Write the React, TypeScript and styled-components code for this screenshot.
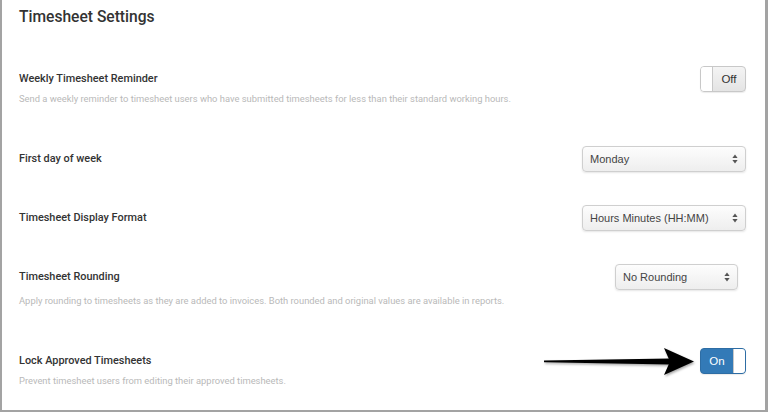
import React from "react";
import styled, { createGlobalStyle } from "styled-components";

const Global = createGlobalStyle`
  html, body { margin: 0; padding: 0; background: #fff; }
  * { box-sizing: border-box; }
`;

const Page = styled.div`
  position: relative;
  width: 768px;
  height: 412px;
  background: #fff;
  border-left: 2px solid #a3a3a3;
  border-right: 3px solid #a3a3a3;
  border-bottom: 2px solid #a3a3a3;
  padding: 7px 19px 0 17px;
  font-family: Roboto, "Liberation Sans", sans-serif;
  overflow: hidden;
`;

const Title = styled.h1`
  margin: 0 0 39px;
  font-size: 15.6px;
  line-height: 20px;
  font-weight: 500;
  color: #333;
`;

const Setting = styled.div<{ $gap: number }>`
  display: flex;
  align-items: flex-start;
  justify-content: space-between;
  margin-bottom: ${(p) => p.$gap}px;
`;

const Info = styled.div`
  display: flex;
  flex-direction: column;
`;

const Label = styled.div`
  font-size: 10.9px;
  line-height: 26px;
  font-weight: 500;
  color: #333;
`;

const Desc = styled.div<{ $offset: number }>`
  font-size: 9.4px;
  line-height: 14px;
  color: #b9b9b9;
  margin-top: ${(p) => p.$offset}px;
`;

const Toggle = styled.div<{ $on: boolean }>`
  width: 46px;
  height: 26px;
  border-radius: 4px;
  border: 1px solid ${(p) => (p.$on ? "#2e6da4" : "#c8c8c8")};
  background: ${(p) =>
    p.$on ? "#337ab7" : "linear-gradient(#f4f4f4, #e4e4e4)"};
  display: flex;
  flex-direction: ${(p) => (p.$on ? "row-reverse" : "row")};
  overflow: hidden;
  box-shadow: 0 1px 1px rgba(0, 0, 0, 0.08);
  font-family: "Liberation Sans", Arial, sans-serif;
`;

const Knob = styled.div<{ $on: boolean }>`
  width: 12px;
  height: 100%;
  background: #fff;
  border-${(p) => (p.$on ? "left" : "right")}: 1px solid #c8c8c8;
`;

const ToggleText = styled.div<{ $on: boolean }>`
  flex: 1;
  display: flex;
  align-items: center;
  justify-content: center;
  font-size: 11.5px;
  color: ${(p) => (p.$on ? "#fff" : "#333")};
`;

const Select = styled.div<{ $w: number; $mr: number }>`
  width: ${(p) => p.$w}px;
  height: 26px;
  margin-right: ${(p) => p.$mr}px;
  border: 1px solid #cfcfcf;
  border-radius: 4px;
  background: linear-gradient(#fdfdfd, #eeeeee);
  box-shadow: 0 1px 2px rgba(0, 0, 0, 0.1);
  display: flex;
  align-items: center;
  justify-content: space-between;
  padding: 0 7px 0 7px;
  font-family: "Liberation Sans", Arial, sans-serif;
  font-size: 11px;
  color: #444;
`;

const Arrow = styled.svg`
  position: absolute;
  left: 536px;
  top: 343px;
  overflow: visible;
`;

const Chevrons = () => (
  <svg width="6" height="10" viewBox="0 0 6 10">
    <path d="M3 0.5 L5.6 4 H0.4 Z" fill="#555" />
    <path d="M3 9.5 L5.6 6 H0.4 Z" fill="#555" />
  </svg>
);

type Control =
  | { kind: "toggle"; on: boolean }
  | { kind: "select"; value: string; w: number; mr: number };

const settings: {
  label: string;
  desc?: string;
  offset?: number;
  gap: number;
  control: Control;
}[] = [
  {
    label: "Weekly Timesheet Reminder",
    desc: "Send a weekly reminder to timesheet users who have submitted timesheets for less than their standard working hours.",
    offset: 0,
    gap: 40,
    control: { kind: "toggle", on: false },
  },
  {
    label: "First day of week",
    gap: 33,
    control: { kind: "select", value: "Monday", w: 164, mr: 0 },
  },
  {
    label: "Timesheet Display Format",
    gap: 33,
    control: { kind: "select", value: "Hours Minutes (HH:MM)", w: 164, mr: 0 },
  },
  {
    label: "Timesheet Rounding",
    desc: "Apply rounding to timesheets as they are added to invoices. Both rounded and original values are available in reports.",
    offset: 4,
    gap: 40,
    control: { kind: "select", value: "No Rounding", w: 123, mr: 8 },
  },
  {
    label: "Lock Approved Timesheets",
    desc: "Prevent timesheet users from editing their approved timesheets.",
    offset: 0,
    gap: 0,
    control: { kind: "toggle", on: true },
  },
];

export default function App() {
  return (
    <Page>
      <Global />
      <Title>Timesheet Settings</Title>
      {settings.map((s) => (
        <Setting key={s.label} $gap={s.gap}>
          <Info>
            <Label>{s.label}</Label>
            {s.desc && <Desc $offset={s.offset ?? 0}>{s.desc}</Desc>}
          </Info>
          {s.control.kind === "toggle" ? (
            <Toggle $on={s.control.on}>
              <Knob $on={s.control.on} />
              <ToggleText $on={s.control.on}>{s.control.on ? "On" : "Off"}</ToggleText>
            </Toggle>
          ) : (
            <Select $w={s.control.w} $mr={s.control.mr}>
              <span>{s.control.value}</span>
              <Chevrons />
            </Select>
          )}
        </Setting>
      ))}
      <Arrow width="160" height="36" viewBox="0 0 160 36">
        <defs>
          <filter id="sh" x="-10%" y="-30%" width="130%" height="170%">
            <feDropShadow dx="1" dy="1.5" stdDeviation="1.2" floodColor="#000" floodOpacity="0.35" />
          </filter>
        </defs>
        <g filter="url(#sh)" fill="#000">
          <path d="M6 17.6 L132 15.4 L132 21.4 L6 19.2 Z" />
          <path d="M126 5 L156 18.5 L126 32 L132 18.5 Z" />
        </g>
      </Arrow>
    </Page>
  );
}
